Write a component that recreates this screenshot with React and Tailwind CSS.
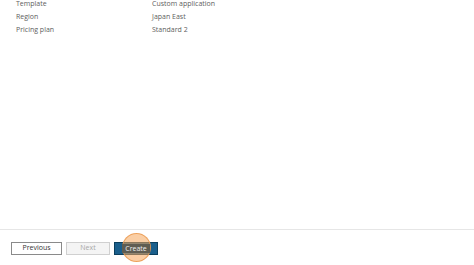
import React from 'react';

const rows = [
  { label: 'Template', value: 'Custom application' },
  { label: 'Region', value: 'Japan East' },
  { label: 'Pricing plan', value: 'Standard 2' },
];

const App = () => {
  return (
    <div
      className="w-[474px] h-[265px] bg-white flex flex-col overflow-hidden"
      style={{ fontFamily: '"Open Sans", "Noto Sans", sans-serif' }}
    >
      {/* Summary rows */}
      <div className="flex-1 mt-[-2px]">
        {rows.map((row) => (
          <div key={row.label} className="flex h-[13px] items-center text-[7px] text-[#606060]">
            <span className="w-[152px] shrink-0 pl-[16px]">{row.label}</span>
            <span>{row.value}</span>
          </div>
        ))}
      </div>

      {/* Footer */}
      <div className="h-[36px] border-t border-[#e6e6e6] pt-[12px] pl-[11px] flex gap-[4px] items-start">
        <button className="w-[51px] h-[13px] border border-[#8a8a8a] bg-white text-[7px] text-[#333] flex items-center justify-center">
          Previous
        </button>
        <button className="w-[44px] h-[13px] border border-[#d0d0d0] bg-[#f4f4f4] text-[7px] text-[#a8a8a8] flex items-center justify-center">
          Next
        </button>
        <div className="relative">
          <button className="w-[44px] h-[13px] border border-[#0b3f5e] bg-[#1a5f8c] text-[7px] text-white flex items-center justify-center">
            <span className="relative z-10 px-[3px] bg-[#5f5d52] leading-[9px] text-[#f0f0f0]">Create</span>
          </button>
          <div className="absolute left-[8px] top-[-9px] w-[29px] h-[29px] rounded-full bg-[#f5a55a]/55 border border-[#e89548]/80 pointer-events-none" />
        </div>
      </div>
    </div>
  );
};

export default App;
